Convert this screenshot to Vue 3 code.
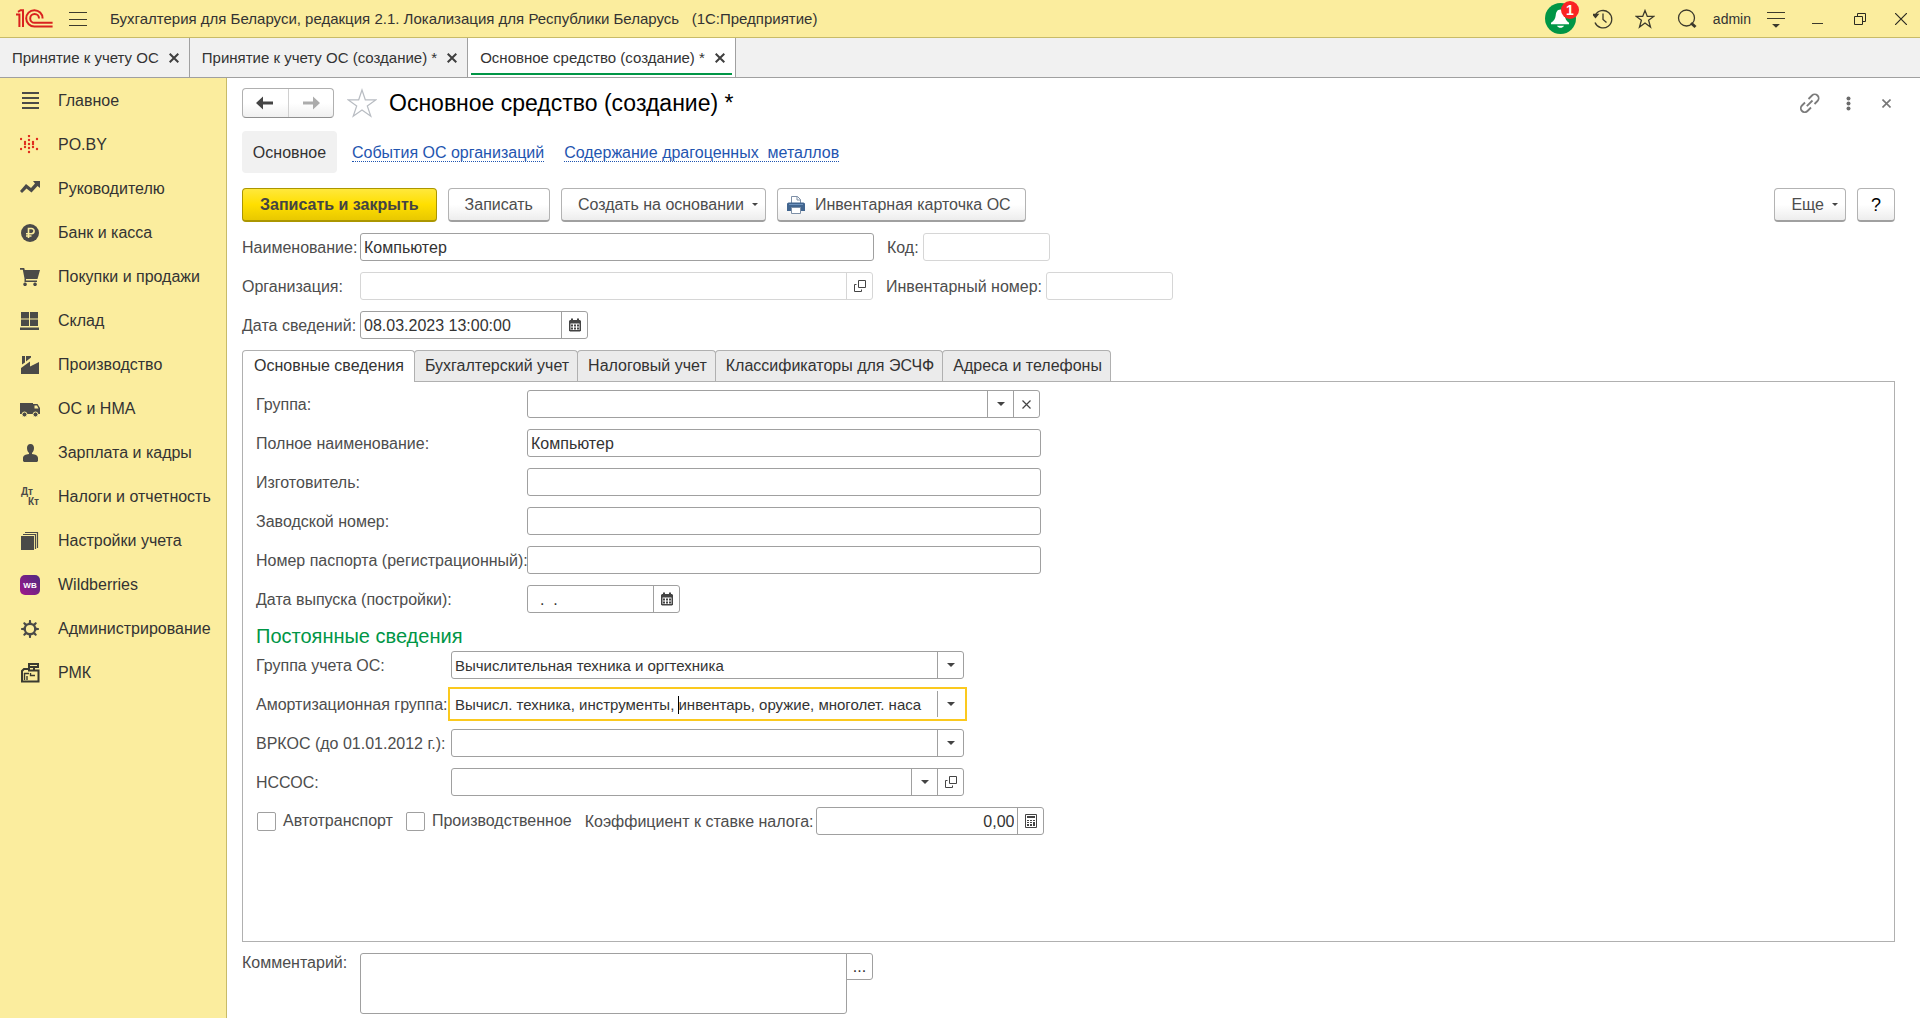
<script setup>
import { ref } from 'vue'

const openTabs = ['Принятие к учету ОС', 'Принятие к учету ОС (создание) *', 'Основное средство (создание) *']
const activeWindow = ref(2)

const sections = [
  { icon: 'main', label: 'Главное' },
  { icon: 'poby', label: 'PO.BY' },
  { icon: 'chart', label: 'Руководителю' },
  { icon: 'bank', label: 'Банк и касса' },
  { icon: 'cart', label: 'Покупки и продажи' },
  { icon: 'stock', label: 'Склад' },
  { icon: 'factory', label: 'Производство' },
  { icon: 'truck', label: 'ОС и НМА' },
  { icon: 'person', label: 'Зарплата и кадры' },
  { icon: 'tax', label: 'Налоги и отчетность' },
  { icon: 'books', label: 'Настройки учета' },
  { icon: 'wb', label: 'Wildberries' },
  { icon: 'gear', label: 'Администрирование' },
  { icon: 'pos', label: 'РМК' }
]

const pobyDots = [
  [9, 1], [9, 5], [9, 9], [9, 13], [9, 17], [5, 7], [5, 12], [13, 7], [13, 12],
  [1, 4], [1, 14], [17, 4], [17, 14], [5, 9], [13, 9]
]
const gearAngles = [0, 45, 90, 135, 180, 225, 270, 315]

const pages = ['Основные сведения', 'Бухгалтерский учет', 'Налоговый учет', 'Классификаторы для ЭСЧФ', 'Адреса и телефоны']
const activePage = ref(0)

const name = ref('Компьютер')
const code = ref('')
const organization = ref('')
const inventoryNumber = ref('')
const infoDate = ref('08.03.2023 13:00:00')
const group = ref('')
const details = ref([
  { id: 'full-name', label: 'Полное наименование:', value: 'Компьютер' },
  { id: 'maker', label: 'Изготовитель:', value: '' },
  { id: 'serial', label: 'Заводской номер:', value: '' },
  { id: 'passport', label: 'Номер паспорта (регистрационный):', value: '' }
])
const releaseDate = ref('  .  .')
const assetGroup = ref('Вычислительная техника и оргтехника')
const beforeCaret = 'Вычисл. техника, инструменты, '
const depreciation = ref(beforeCaret + 'инвентарь, оружие, многолет. наса')
const vrkos = ref('')
const nssos = ref('')
const isVehicle = ref(false)
const isProduction = ref(false)
const taxRate = ref('0,00')
const comment = ref('')
</script>

<template>
  <div class="app">
    <header class="titlebar">
      <svg class="logo" viewBox="0 0 37 19" fill="none" stroke="#d9221f" stroke-width="2">
        <path d="M0 5.4H3.4V18M2 2.8L4.6 1.2H7V18" />
        <path d="M26.6 9.4A8.2 8.2 0 1 0 18.6 17.6H36.6M23 9.4A4.4 4.4 0 1 0 18.6 13.8H36.6" />
      </svg>
      <button class="burger" aria-label="Меню">
        <svg width="18" height="16" viewBox="0 0 18 16" stroke="#3c3a2c" stroke-width="1.2"><path d="M0 1.5H18M0 8.5H18M0 14.5H18" /></svg>
      </button>
      <h1 class="app-title">Бухгалтерия для Беларуси, редакция 2.1. Локализация для Республики Беларусь&nbsp;&nbsp; (1С:Предприятие)</h1>
      <div class="tools">
        <button class="tool bell" aria-label="Оповещения">
          <svg width="31" height="31" viewBox="0 0 31 31">
            <circle cx="15.5" cy="15.5" r="15.5" fill="#009646" />
            <path d="M15.5 6.5c-3.500 0-4.500 3-4.800 6-.3 3-1.500 5.200-4.700 7.300v1.400h18v-1.400c-3-2.100-3.900-4.300-4.200-7.300-.3-3-1.300-6-4.300-6zM12 22.800h7c-.8 1.600-2 2-3.500 2s-2.700-.4-3.500-2z" fill="#fff" />
          </svg>
          <span class="badge">1</span>
        </button>
        <button class="tool" aria-label="История">
          <svg width="20" height="20" viewBox="0 0 20 20" fill="none" stroke="#3c3a2c" stroke-width="1.300">
            <path d="M2.200 6.500A8.700 8.700 0 1 1 2 13.500M10 4.500V10.500L13.500 13.500" /><path d="M0 5.500H5L2.500 8.500z" fill="#3c3a2c" />
          </svg>
        </button>
        <button class="tool" aria-label="Избранное">
          <svg width="20" height="20" viewBox="0 0 20 20" fill="none" stroke="#3c3a2c" stroke-width="1.300">
            <path d="M10 1.500L12.300 7.400H18.700L13.600 11.300L15.500 18L10 14L4.500 18L6.400 11.300L1.300 7.400H7.700z" />
          </svg>
        </button>
        <button class="tool" aria-label="Поиск">
          <svg width="20" height="20" viewBox="0 0 20 20" fill="none" stroke="#3c3a2c">
            <circle cx="9.500" cy="9" r="8" stroke-width="1.300" /><path d="M14 14L18.500 18" stroke-width="3" />
          </svg>
        </button>
        <button class="user">admin</button>
        <button class="tool" aria-label="Настройки">
          <svg width="18" height="18" viewBox="0 0 18 18" stroke="#3c3a2c" stroke-width="1.200">
            <path d="M0 2.500H18M0 8.500H18" /><path d="M6.500 14.500H11.500L9 17z" fill="#3c3a2c" />
          </svg>
        </button>
        <button class="tool" aria-label="Свернуть">
          <svg width="12" height="12" viewBox="0 0 12 12" stroke="#3c3a2c"><path d="M0 10.500H11" /></svg>
        </button>
        <button class="tool" aria-label="Развернуть">
          <svg width="12" height="12" viewBox="0 0 12 12" fill="none" stroke="#2b2a22"><path d="M.5 3.500H8.500V11.500H.5zM3.500 3.500V.5H11.500V8.500H8.500" /></svg>
        </button>
        <button class="tool last" aria-label="Закрыть">
          <svg width="12" height="12" viewBox="0 0 12 12" stroke="#2b2a22" stroke-width="1.200"><path d="M0 0L12 12M12 0L0 12" /></svg>
        </button>
      </div>
    </header>

    <nav class="windows">
      <div v-for="(t, i) in openTabs" :key="t" class="window" :class="{ active: i === activeWindow }">
        <button class="window-name" @click="activeWindow = i">{{ t }}</button>
        <button class="window-close" aria-label="Закрыть вкладку">
          <svg width="10" height="10" viewBox="0 0 10 10" stroke="#3f3f3f" stroke-width="2"><path d="M.7 .7L9.300 9.300M9.300 .7L.7 9.300" /></svg>
        </button>
      </div>
    </nav>

    <div class="body">
      <nav class="sidebar">
        <a v-for="s in sections" :key="s.icon" href="#" class="section">
          <svg class="section-icon" viewBox="0 0 20 20" fill="#4a4a48">
            <path v-if="s.icon === 'main'" d="M2 1h17v2H2zM2 6h17v2H2zM2 11h17v2H2zM2 16h17v2H2z" />
            <g v-else-if="s.icon === 'poby'" fill="#e02a1c">
              <circle v-for="(d, i) in pobyDots" :key="i" :cx="d[0]" :cy="d[1]" r="1.200" />
            </g>
            <path v-else-if="s.icon === 'chart'" d="M0 12L6 5L11 9L15 4.500L13 2H20V9L17.500 7L11.500 13.500L6.500 9.500L2 14z" />
            <g v-else-if="s.icon === 'bank'">
              <circle cx="10" cy="10" r="9" />
              <path d="M8.500 15V5.500H11.500a2.600 2.600 0 0 1 0 5.200H6M6 13H11.500" fill="none" stroke="#fbed9e" stroke-width="1.600" />
            </g>
            <path v-else-if="s.icon === 'cart'" d="M0 1H4.200L4.800 3H20L17.500 12H6V13.500H17V15H4.500V11.500L2.800 2.700H0zM5 15.500a1.800 1.800 0 1 0 .1 0zM15 15.500a1.800 1.800 0 1 0 .1 0z" />
            <path v-else-if="s.icon === 'stock'" d="M1 1H9V7.500H1zM10 1H18V7.500H10zM1 8.500H9V15H1zM10 8.500H18V15H10zM0 16.500H19V19H0z" />
            <path v-else-if="s.icon === 'factory'" d="M1 19V13L10 6.500V11.500L19 7V19zM2 1H5V7.500L2 9.500zM6 1H11V2.500L6 6.500z" />
            <g v-else-if="s.icon === 'truck'">
              <path d="M0 4H13V15H0zM13 5H17.500L20 9V15H13z" />
              <path d="M14.500 6.500H17L18.500 9.500H14.500z" fill="#fbed9e" />
              <circle cx="4.500" cy="15.500" r="2.500" stroke="#fbed9e" /><circle cx="15.500" cy="15.500" r="2.500" stroke="#fbed9e" />
            </g>
            <path v-else-if="s.icon === 'person'" d="M10.500 1C13 1 14 2.800 14 5c0 2-.8 4-2 5v1c3.500 .5 6 1.500 6 4V18l-1 1H4l-1-1v-3c0-2.500 2.500-3.500 6-4V10C7.800 9 7 7 7 5c0-2.200 1-4 3.500-4z" />
            <g v-else-if="s.icon === 'tax'" class="glyphs"><text x="1" y="8">Дт</text><text x="8" y="18">Кт</text></g>
            <g v-else-if="s.icon === 'books'">
              <path d="M1 5H14V19H1z" /><path d="M3 3.500H15.500V18M5 1.500H17.500V17" fill="none" stroke="#4a4a48" stroke-width="1.200" />
            </g>
            <g v-else-if="s.icon === 'wb'">
              <defs><linearGradient id="wb-fill" x1="0" y1="1" x2="1" y2="0"><stop offset="0" stop-color="#a0188c" /><stop offset="1" stop-color="#4e2a80" /></linearGradient></defs>
              <rect width="20" height="20" rx="5" fill="url(#wb-fill)" /><text class="wb-text" x="10" y="13" text-anchor="middle">WB</text>
            </g>
            <g v-else-if="s.icon === 'gear'">
              <circle cx="10" cy="10" r="5.200" fill="none" stroke="#4a4a48" stroke-width="2.200" />
              <path v-for="a in gearAngles" :key="a" d="M8.600 4.500L9.200 1H10.800L11.400 4.500z" :transform="`rotate(${a} 10 10)`" />
            </g>
            <g v-else fill="none" stroke="#3a3a30" stroke-width="2">
              <path d="M9 1H18V4H9zM14 4V7M4 6H9V7.500H18.500V18.500H2V8z" />
              <path d="M4 10.500H9M4.500 10V17M7 13V17M10.500 10V12.500H15" stroke-width="1.400" />
            </g>
          </svg>
          <span>{{ s.label }}</span>
        </a>
      </nav>

      <main class="form">
        <div class="form-head">
          <div class="history">
            <button aria-label="Назад">
              <svg width="18" height="14" viewBox="0 0 18 14" fill="#444"><path d="M0 7L7 .5V5.500H17V8.500H7V13.500z" /></svg>
            </button>
            <button aria-label="Вперед">
              <svg width="18" height="14" viewBox="0 0 18 14" fill="#acacac"><path d="M18 7L11 .5V5.500H1V8.500H11V13.500z" /></svg>
            </button>
          </div>
          <button class="star" aria-label="Добавить в избранное">
            <svg width="30" height="30" viewBox="0 0 30 30" fill="#fff" stroke="#b8bcc2" stroke-width="1.200"><path d="M15 2L18.300 11.800H29L20.300 17.900L23.800 28.300L15 22L6.200 28.300L9.700 17.900L1 11.800H11.700z" /></svg>
          </button>
          <h2 class="form-title">Основное средство (создание) *</h2>
          <div class="head-tools">
            <button aria-label="Получить ссылку">
              <svg width="20" height="20" viewBox="0 0 20 20" fill="none" stroke="#7b7b7b" stroke-width="1.800">
                <path d="M8.500 6L12 2.500A3.800 3.800 0 0 1 17.500 8L14.500 11M12.500 7.500L6.800 13.200M5 9.500L2 12.500A3.800 3.800 0 0 0 7.500 18L11 14.500" />
              </svg>
            </button>
            <button aria-label="Дополнительно">
              <svg width="5" height="15" viewBox="0 0 5 15" fill="#6b6b6b"><circle cx="2.500" cy="2.500" r="2" /><circle cx="2.500" cy="7.500" r="2" /><circle cx="2.500" cy="12.500" r="2" /></svg>
            </button>
            <button aria-label="Закрыть форму">
              <svg width="9" height="9" viewBox="0 0 9 9" stroke="#777" stroke-width="1.600"><path d="M.5 .5L8.500 8.500M8.500 .5L.5 8.500" /></svg>
            </button>
          </div>
        </div>

        <nav class="links">
          <span class="link-current">Основное</span>
          <a href="#">События ОС организаций</a>
          <a href="#">Содержание драгоценных&nbsp; металлов</a>
        </nav>

        <div class="commands">
          <button class="btn primary">Записать и закрыть</button>
          <button class="btn">Записать</button>
          <button class="btn menu">Создать на основании<i class="arrow"></i></button>
          <button class="btn print">
            <svg width="18" height="18" viewBox="0 0 18 18">
              <path d="M4.500 8V.5H10.500L13.500 3.500V8" fill="#fff" stroke="#7d8fa6" /><path d="M10 .5V4H13.500" fill="none" stroke="#7d8fa6" />
              <path d="M0 7.500L1.500 6.500H16.500L18 7.500V15H0z" fill="#41658f" /><path d="M2 8.500H16" stroke="#6f93bd" />
              <path d="M4.500 11.500H13.500V17.500H4.500z" fill="#fff" stroke="#7d8fa6" />
            </svg>
            Инвентарная карточка ОС
          </button>
          <button class="btn menu more">Еще<i class="arrow"></i></button>
          <button class="btn help">?</button>
        </div>

        <div class="row">
          <label class="cap top" for="name">Наименование:</label>
          <div class="field wide"><input id="name" v-model="name" type="text" /></div>
          <label class="cap side" for="code">Код:</label>
          <div class="field number pale"><input id="code" v-model="code" type="text" /></div>
        </div>
        <div class="row">
          <label class="cap top" for="org">Организация:</label>
          <div class="field combo pale">
            <input id="org" v-model="organization" type="text" />
            <button aria-label="Открыть организацию"><svg class="open" viewBox="0 0 12 12"><path d="M4.500 .5H11.500V7.500H4.500zM2.500 4.500H.5V11.500H7.500V9.500" /></svg></button>
          </div>
          <label class="cap side" for="inv">Инвентарный номер:</label>
          <div class="field number pale"><input id="inv" v-model="inventoryNumber" type="text" /></div>
        </div>
        <div class="row">
          <label class="cap top" for="info-date">Дата сведений:</label>
          <div class="field medium">
            <input id="info-date" v-model="infoDate" type="text" />
            <button aria-label="Выбрать дату"><svg class="cal" viewBox="0 0 12 13"><path d="M1 1.500H11L12 2.500V12L11 13H1L0 12V2.500z" /><path d="M1.500 5H10.500V11.500H1.500z" fill="#fff" /><path d="M2 6h2v2H2zM5 6h2v2H5zM8 6h2v2H8zM2 9h2v2H2zM5 9h2v2H5zM8 9h2v2H8zM2 0h2v2H2zM8 0h2v2H8z" /></svg></button>
          </div>
        </div>

        <div class="pages" role="tablist">
          <button v-for="(p, i) in pages" :key="p" role="tab" :aria-selected="i === activePage" :class="{ active: i === activePage }" @click="activePage = i">{{ p }}</button>
        </div>

        <section class="panel">
          <div class="row">
            <label class="cap long" for="group">Группа:</label>
            <div class="field combo">
              <input id="group" v-model="group" type="text" />
              <button aria-label="Выбрать группу"><i class="arrow big"></i></button>
              <button aria-label="Очистить" @click="group = ''"><svg class="clear" viewBox="0 0 9 9"><path d="M.5 .5L8.500 8.500M8.500 .5L.5 8.500" /></svg></button>
            </div>
          </div>
          <div v-for="d in details" :key="d.id" class="row">
            <label class="cap long" :for="d.id">{{ d.label }}</label>
            <div class="field wide"><input :id="d.id" v-model="d.value" type="text" /></div>
          </div>
          <div class="row">
            <label class="cap long" for="release">Дата выпуска (постройки):</label>
            <div class="field short">
              <input id="release" v-model="releaseDate" type="text" />
              <button aria-label="Выбрать дату выпуска"><svg class="cal" viewBox="0 0 12 13"><path d="M1 1.500H11L12 2.500V12L11 13H1L0 12V2.500z" /><path d="M1.500 5H10.500V11.500H1.500z" fill="#fff" /><path d="M2 6h2v2H2zM5 6h2v2H5zM8 6h2v2H8zM2 9h2v2H2zM5 9h2v2H5zM8 9h2v2H8zM2 0h2v2H2zM8 0h2v2H8z" /></svg></button>
            </div>
          </div>

          <h3 class="group-title">Постоянные сведения</h3>

          <div class="row">
            <label class="cap mid" for="asset-group">Группа учета ОС:</label>
            <div class="field combo compact">
              <select id="asset-group" v-model="assetGroup"><option>Вычислительная техника и оргтехника</option></select>
              <span class="drop"><i class="arrow big"></i></span>
            </div>
          </div>
          <div class="row">
            <label class="cap mid" for="depreciation">Амортизационная группа:</label>
            <div class="field combo compact focused">
              <input id="depreciation" v-model="depreciation" type="text" />
              <span class="caret" aria-hidden="true">{{ beforeCaret }}</span>
              <button aria-label="Выбрать амортизационную группу"><i class="arrow big"></i></button>
            </div>
          </div>
          <div class="row">
            <label class="cap mid" for="vrkos">ВРКОС (до 01.01.2012 г.):</label>
            <div class="field combo compact">
              <select id="vrkos" v-model="vrkos"><option value=""></option></select>
              <span class="drop"><i class="arrow big"></i></span>
            </div>
          </div>
          <div class="row">
            <label class="cap mid" for="nssos">НССОС:</label>
            <div class="field combo compact">
              <input id="nssos" v-model="nssos" type="text" />
              <button aria-label="Выбрать НССОС"><i class="arrow big"></i></button>
              <button aria-label="Открыть НССОС"><svg class="open" viewBox="0 0 12 12"><path d="M4.500 .5H11.500V7.500H4.500zM2.500 4.500H.5V11.500H7.500V9.500" /></svg></button>
            </div>
          </div>
          <div class="row flags">
            <label class="check"><input v-model="isVehicle" type="checkbox" />Автотранспорт</label>
            <label class="check"><input v-model="isProduction" type="checkbox" />Производственное</label>
            <label class="cap rate" for="rate">Коэффициент к ставке налога:</label>
            <div class="field medium">
              <input id="rate" v-model="taxRate" class="amount" type="text" />
              <button aria-label="Калькулятор"><svg class="cal" viewBox="0 0 12 14"><path d="M.5 .5H11.500V13.500H.5z" fill="#fff" stroke="#444" /><path d="M2 2h8v2H2zM2 6h2v1H2zM5 6h2v1H5zM8 6h2v1H8zM2 8h2v1H2zM5 8h2v1H5zM2 10h2v2H2zM5 10h2v2H5zM8 8h2v4H8z" /></svg></button>
            </div>
          </div>
        </section>

        <div class="comment">
          <label class="cap top" for="comment">Комментарий:</label>
          <textarea id="comment" v-model="comment"></textarea>
          <button aria-label="Редактировать комментарий">...</button>
        </div>
      </main>
    </div>
  </div>
</template>

<style>
body { margin: 0; }
</style>

<style scoped>
.app {
  display: flex;
  flex-direction: column;
  min-height: 100vh;
  background: #fff;
  color: #333;
  font: 16px/20px "Liberation Sans", Arial, sans-serif;
}
.app *, .app *::before { box-sizing: border-box; }
button, input, select, textarea { margin: 0; padding: 0; border: 0; background: none; color: inherit; font: inherit; outline: 0; }
button { display: flex; align-items: center; justify-content: center; white-space: nowrap; }
svg { display: block; flex: none; }

.titlebar { display: flex; align-items: center; height: 38px; padding-left: 16px; background: #fbed9e; border-bottom: 1px solid #c8bb68; }
.logo { width: 37px; height: 19px; }
.burger { margin: 0 23px 0 16px; }
.app-title { flex: 1; margin: 0; font-size: 15px; font-weight: 400; white-space: nowrap; }
.tools { display: flex; align-items: center; }
.tool { position: relative; width: 42px; height: 37px; }
.tool.last { width: 39px; }
.badge { position: absolute; top: 1px; right: 3px; width: 18px; height: 18px; border-radius: 9px; background: #fa2323; color: #fff; font-size: 14px; line-height: 18px; font-weight: 700; }
.user { padding: 0 4px 0 5px; font-size: 14px; }

.windows { display: flex; height: 40px; background: #f1f1f1; border-bottom: 1px solid #a0a0a0; font-size: 15px; }
.window { display: flex; align-items: center; gap: 10px; padding: 0 10px 0 12px; border-right: 1px solid #a0a0a0; }
.window.active { position: relative; background: #fff; }
.window.active::before { content: ""; position: absolute; left: 3px; right: 3px; bottom: 2px; height: 2px; background: #009646; }

.body { display: flex; flex: 1; }
.sidebar { flex: none; width: 227px; padding-top: 1px; background: #fbed9e; border-right: 1px solid #c8bb68; }
.section { display: flex; align-items: center; gap: 18px; height: 44px; padding-left: 20px; color: #333; text-decoration: none; white-space: nowrap; }
.section-icon { width: 20px; height: 20px; }
.glyphs { font-size: 10px; font-weight: 700; }
.wb-text { fill: #fff; font-size: 8px; font-weight: 700; }

.form { display: flex; flex: 1; flex-direction: column; min-width: 0; padding: 10px 25px 4px 15px; }
.form-head { display: flex; align-items: center; height: 30px; }
.history { display: flex; width: 92px; height: 30px; border: 1px solid #b0b0b0; border-bottom-color: #8f8f8f; border-radius: 4px; background: linear-gradient(#fff 50%, #f0f0f0); }
.history button { flex: 1; }
.history button + button { border-left: 1px solid #d0d0d0; }
.star { margin: 0 12px 0 13px; }
.form-title { flex: 1; margin: 0; color: #000; font-size: 23px; line-height: 28px; font-weight: 400; white-space: nowrap; }
.head-tools { display: flex; }
.head-tools button { width: 38px; height: 30px; }
.head-tools button:last-child { margin-right: -10px; }

.links { display: flex; align-items: center; height: 42px; margin: 13px 0 15px; white-space: nowrap; }
.link-current { width: 95px; padding: 12px 0 10px; border-radius: 4px; background: #f1f1f1; text-align: center; }
.links a { margin: 2px 0 0 15px; color: #1f55b0; text-decoration: none; border-bottom: 1px dotted #1f55b0; line-height: 17px; }
.links a + a { margin-left: 20px; }

.commands { display: flex; gap: 11px; margin-bottom: 11px; }
.btn { height: 34px; padding: 0 16px; border: 1px solid #b3b3b3; border-bottom: 2px solid #a0a0a0; border-radius: 4px; background: linear-gradient(#fff 50%, #ededed); color: #4d4d4d; }
.primary { padding: 0 17px; border-color: #ab9600; background: linear-gradient(#ffe83c, #ffdf00 50%, #e8c800); color: #444; font-weight: 700; }
.menu { gap: 8px; padding-right: 7px; }
.print { gap: 10px; padding: 0 14px 0 9px; }
.more { margin-left: auto; }
.help { width: 38px; padding: 0; color: #000; font-size: 18px; }
.arrow { border: 3px solid transparent; border-top-color: #444; border-bottom: 0; }
.arrow.big { border-width: 4px 4px 0; }

.row { display: flex; align-items: center; height: 28px; margin-bottom: 11px; white-space: nowrap; }
.cap { flex: none; padding-top: 2px; color: #4d4d4d; }
.top { width: 118px; }
.side { margin: 0 4px 0 13px; }
.long { width: 271px; }
.mid { width: 195px; }
.rate { margin-right: 3px; }
.field { position: relative; display: flex; flex: none; height: 28px; border: 1px solid #a0a0a0; border-radius: 3px; background: #fff; }
.field input, .field select { flex: 1; min-width: 0; padding: 2px 3px 0; appearance: none; }
.field button, .drop { width: 26px; flex: none; border-left: 1px solid #a0a0a0; }
.drop { display: flex; align-items: center; justify-content: center; }
.field.pale, .pale button { border-color: #d6d6d6; }
.wide { width: 514px; }
.combo { width: 513px; }
.compact { font-size: 15px; }
.medium { width: 228px; }
.short { width: 153px; }
.number { width: 127px; }
.field .amount { text-align: right; }
.focused { border-color: transparent; outline: 2px solid #fbc91e; outline-offset: 1px; border-radius: 0; }
.focused input { caret-color: transparent; }
.caret { position: absolute; top: 5px; left: 3px; height: 18px; border-right: 1px solid #000; color: transparent; white-space: pre; pointer-events: none; }
.open { width: 12px; height: 12px; fill: none; stroke: #444; }
.cal { width: 12px; height: 14px; fill: #444; }
.clear { width: 9px; height: 9px; stroke: #444; stroke-width: 1.200; }

.pages { display: flex; height: 31px; }
.pages button { padding: 0 8px 0 10px; border: 1px solid #b0b0b0; border-bottom: 0; border-radius: 4px 4px 0 0; background: #ebebeb; }
.pages button + button { margin-left: -1px; }
.pages .active { position: relative; height: 32px; padding: 0 10px 1px 11px; background: #fff; }
.panel { flex: 1; padding: 8px 13px 0; border: 1px solid #b0b0b0; }
.group-title { margin: 0 0 4px; padding-top: 1px; color: #009646; font-size: 20px; line-height: 22px; font-weight: 400; }
.flags { padding-left: 1px; }
.check { display: flex; align-items: center; gap: 7px; margin-right: 13px; color: #4d4d4d; }
.check input { appearance: none; width: 19px; height: 19px; border: 1px solid #a0a0a0; border-radius: 2px; background: #fff; }

.comment { display: flex; align-items: flex-start; margin-top: 11px; }
.comment .cap { padding-top: 0; }
.comment textarea { width: 487px; height: 61px; padding: 4px 3px; border: 1px solid #a0a0a0; border-radius: 3px 0 3px 3px; resize: none; }
.comment button { width: 27px; height: 27px; margin-left: -1px; border: 1px solid #a0a0a0; border-radius: 0 3px 3px 0; }
</style>
